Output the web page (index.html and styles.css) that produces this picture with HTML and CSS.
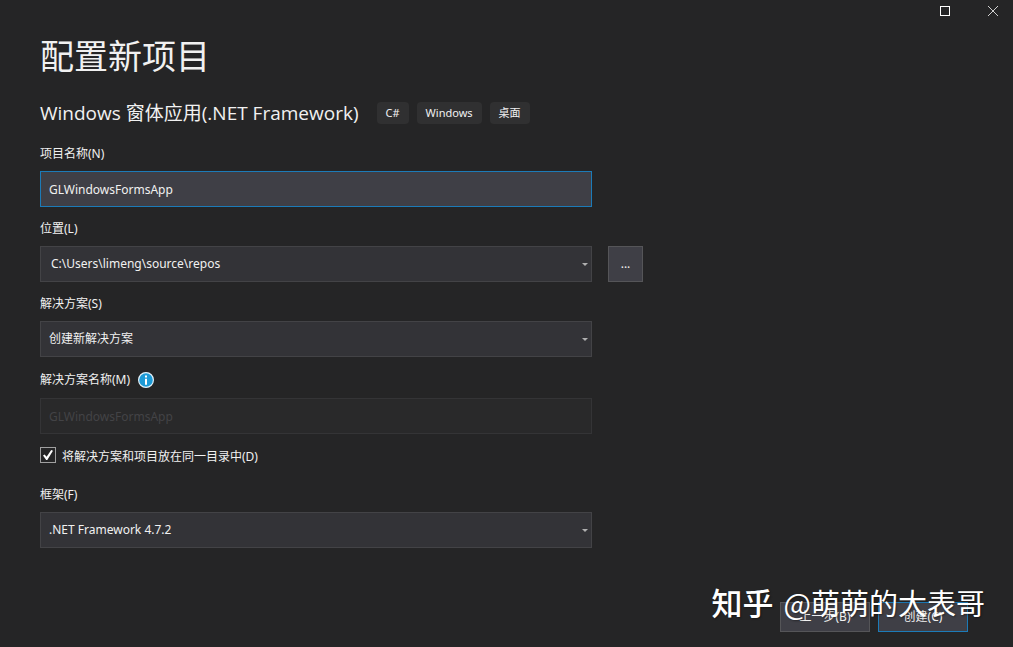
FILE: index.html
```html
<!DOCTYPE html>
<html lang="zh-CN">
<head>
    <meta charset="UTF-8">
    <meta name="viewport" content="width=device-width, initial-scale=1.0">
    <title>配置新项目</title>
    <link rel="stylesheet" href="styles.css">
</head>
<body>
    <!-- Window controls -->
    <header class="titlebar">
        <button type="button" aria-label="最大化">
            <svg width="12" height="12" viewBox="0 0 12 12"><rect x="1.5" y="1.5" width="9" height="9" /></svg>
        </button>
        <button type="button" aria-label="关闭">
            <svg class="close" width="12" height="12" viewBox="0 0 12 12"><path d="M1 1l10 10M11 1L1 11" /></svg>
        </button>
    </header>

    <main>
        <h1>配置新项目</h1>

        <div class="template">
            <h2>Windows 窗体应用(.NET Framework)</h2>
            <ul class="tags">
                <li>C#</li>
                <li>Windows</li>
                <li>桌面</li>
            </ul>
        </div>

        <form id="project" class="fields">
            <div class="field">
                <label for="name">项目名称(N)</label>
                <input type="text" id="name" class="control active" value="GLWindowsFormsApp">
            </div>

            <div class="field">
                <label for="location">位置(L)</label>
                <div class="row">
                    <div class="dropdown">
                        <select id="location" class="control path">
                            <option>C:\Users\limeng\source\repos</option>
                        </select>
                    </div>
                    <button type="button" class="browse" aria-label="浏览">...</button>
                </div>
            </div>

            <div class="field">
                <label for="solution">解决方案(S)</label>
                <div class="dropdown">
                    <select id="solution" class="control">
                        <option>创建新解决方案</option>
                    </select>
                </div>
            </div>

            <div class="field">
                <div class="label-row">
                    <label for="solution-name">解决方案名称(M)</label>
                    <svg width="16" height="16" viewBox="0 0 16 16">
                        <circle cx="8" cy="8" r="7.4" fill="#1c9ad6" stroke="#e4f2fa" stroke-width="1.2" />
                        <path d="M7 3.5h2v2H7zM7 6.7h2v6H7z" fill="#fff" />
                    </svg>
                </div>
                <input type="text" id="solution-name" class="control" value="GLWindowsFormsApp" disabled>
            </div>

            <div class="check">
                <input type="checkbox" id="same-dir" checked>
                <label for="same-dir">将解决方案和项目放在同一目录中(D)</label>
            </div>

            <div class="field">
                <label for="framework">框架(F)</label>
                <div class="dropdown">
                    <select id="framework" class="control">
                        <option>.NET Framework 4.7.2</option>
                    </select>
                </div>
            </div>
        </form>
    </main>

    <footer>
        <button type="button">上一步(B)</button>
        <button type="submit" form="project" class="primary">创建(C)</button>
        <div class="watermark"><b>知乎</b><span>@萌萌的大表哥</span></div>
    </footer>
</body>
</html>
```

FILE: styles.css
```css
* {
    box-sizing: border-box;
}

body {
    display: flex;
    flex-direction: column;
    min-height: 100vh;
    margin: 0;
    background-color: #252526;
    color: #f1f1f1;
    font-family: "Noto Sans", "Noto Sans CJK SC", sans-serif;
    font-size: 12px;
    line-height: 18px;
}

button,
input,
select {
    font: inherit;
    color: inherit;
}

/* Window controls */
.titlebar {
    display: flex;
    justify-content: flex-end;
    height: 22px;
}

.titlebar button {
    display: flex;
    justify-content: center;
    align-items: center;
    width: 48px;
    padding: 0;
    border: none;
    background: none;
}

.titlebar button:last-child {
    width: 40px;
    margin-left: 4px;
}

.titlebar svg {
    fill: none;
    stroke: #fff;
}

.titlebar .close {
    stroke: #d0d0d0;
}

main {
    padding: 10px 40px 0;
}

h1 {
    margin: 0;
    font-size: 34px;
    font-weight: 400;
    line-height: 48px;
}

/* Template name and its tags */
.template {
    display: flex;
    align-items: center;
    gap: 18px;
    margin: 19px 0 18px;
}

h2 {
    margin: 0;
    font-family: "Open Sans", "Noto Sans CJK SC", sans-serif;
    font-size: 19px;
    font-weight: 400;
    line-height: 28px;
}

.tags {
    display: flex;
    gap: 8px;
    margin: 0;
    padding: 0;
    font-size: 11px;
    list-style: none;
}

.tags li {
    padding: 2px 9px;
    border-radius: 4px;
    background-color: #303031;
}

/* Form */
.fields {
    display: flex;
    flex-direction: column;
    gap: 13px;
    max-width: 552px;
}

.field {
    display: flex;
    flex-direction: column;
    gap: 8px;
}

.label-row {
    display: flex;
    align-items: center;
    gap: 8px;
    height: 20px;
}

.control {
    width: 100%;
    height: 36px;
    padding: 0 8px;
    border: 1px solid #434346;
    border-radius: 0;
    background-color: #333337;
    outline: none;
    appearance: none;
}

.control.active {
    border-color: #1c7bb8;
    background-color: #3f3f46;
}

.control.path {
    padding-left: 10px;
}

.control:disabled {
    border-color: #343436;
    background-color: #29292a;
    color: #434346;
}

.row {
    display: flex;
    gap: 16px;
}

.dropdown {
    position: relative;
    flex: 0 0 100%;
}

.dropdown::after {
    content: "";
    position: absolute;
    top: 17px;
    right: 4px;
    border: 3px solid transparent;
    border-top-color: #b0b0b0;
    border-bottom: none;
    pointer-events: none;
}

.browse {
    flex: 0 0 35px;
    padding: 0;
    border: 1px solid #555558;
    background-color: #3f3f46;
}

.check {
    display: flex;
    gap: 6px;
    height: 26px;
}

.check label {
    padding-top: 1px;
}

.check input {
    display: grid;
    place-items: center;
    width: 16px;
    height: 16px;
    margin: 0;
    border: 1px solid #a0a0a0;
    appearance: none;
}

.check input:checked::before {
    content: "";
    width: 10px;
    height: 10px;
    background-color: #fff;
    clip-path: polygon(0 55%, 16% 44%, 36% 68%, 82% 0, 100% 8%, 43% 100%, 32% 100%);
}

/* Bottom buttons */
footer {
    position: relative;
    display: flex;
    justify-content: flex-end;
    gap: 8px;
    margin-top: auto;
    padding: 0 45px 15px;
}

footer button {
    width: 90px;
    height: 30px;
    padding: 0;
    border: 1px solid #555558;
    background-color: #3f3f46;
}

footer .primary {
    border-color: #1c7bb8;
}

.watermark {
    position: absolute;
    right: 28px;
    bottom: 25px;
    display: flex;
    gap: 10px;
    color: #fff;
    font-family: "Noto Sans CJK SC", sans-serif;
    font-size: 29px;
    line-height: 40px;
    white-space: nowrap;
    text-shadow: 1px 1px 2px rgba(0, 0, 0, 0.4);
    pointer-events: none;
}

.watermark b {
    font-size: 31px;
    font-weight: 500;
}
```
